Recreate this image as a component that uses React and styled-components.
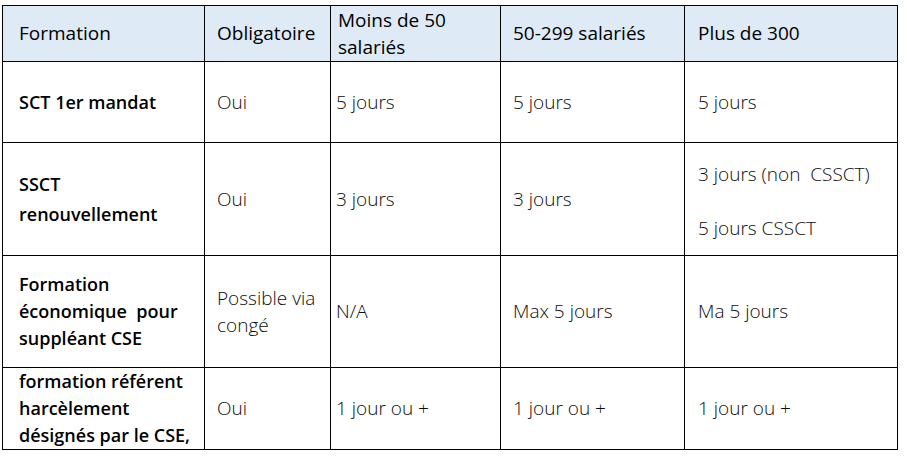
import React from "react";
import styled, { createGlobalStyle } from "styled-components";

const GlobalStyle = createGlobalStyle`
  body {
    margin: 0;
    background: #ffffff;
    font-family: "Open Sans", "Noto Sans", sans-serif;
  }
`;

const Page = styled.div`
  padding: 5px 0 0 2px;
`;

const Table = styled.table`
  border-collapse: collapse;
  table-layout: fixed;
  width: 896px;
  color: #111;
`;

const Row = styled.tr`
  height: ${(p) => p.$h}px;
`;

const HeadCell = styled.th`
  background: #deeaf6;
  border: 1px solid #000;
  text-align: left;
  vertical-align: middle;
  font-size: 19px;
  font-weight: 400;
  line-height: 27px;
  padding: 0 4px 0 ${(p) => p.$pad}px;
  color: #000;
`;

const Cell = styled.td`
  border: 1px solid #000;
  vertical-align: middle;
  font-size: ${(p) => (p.$strong ? 18 : 19)}px;
  font-weight: ${(p) => (p.$strong ? 600 : 300)};
  line-height: ${(p) => p.$lh ?? 27}px;
  padding: 0 4px 0 ${(p) => p.$pad}px;
  color: ${(p) => (p.$strong ? "#000" : "#0c0c0c")};
`;

const Stack = styled.div`
  display: flex;
  flex-direction: column;
  gap: ${(p) => p.$gap ?? 0}px;
  margin-top: ${(p) => p.$shift ?? 0}px;
`;

const Line = styled.div`
  white-space: pre;
`;

const cols = [202, 126, 170, 184, 213];
const pads = [16, 12, 5, 12, 13];

const rows = [
  {
    h: 81,
    cells: [["SCT 1er mandat"], ["Oui"], ["5 jours"], ["5 jours"], ["5 jours"]],
  },
  {
    h: 113,
    lh: 30,
    gap: 27,
    cells: [
      ["SSCT", "renouvellement"],
      ["Oui"],
      ["3 jours"],
      ["3 jours"],
      ["3 jours (non  CSSCT)", "5 jours CSSCT"],
    ],
  },
  {
    h: 112,
    cells: [
      ["Formation", "économique  pour", "suppléant CSE"],
      ["Possible via", "congé"],
      ["N/A"],
      ["Max 5 jours"],
      ["Ma 5 jours"],
    ],
  },
  {
    h: 80,
    cells: [
      ["formation référent", "harcèlement", "désignés par le CSE,"],
      ["Oui"],
      ["1 jour ou +"],
      ["1 jour ou +"],
      ["1 jour ou +"],
    ],
  },
];

export default function App() {
  return (
    <Page>
      <GlobalStyle />
      <Table>
        <colgroup>
          {cols.map((w, i) => (
            <col key={i} style={{ width: w }} />
          ))}
        </colgroup>
        <thead>
          <Row $h={56}>
            <HeadCell $pad={16}>Formation</HeadCell>
            <HeadCell $pad={12}>Obligatoire</HeadCell>
            <HeadCell $pad={7}>
              <Stack>
                <Line>Moins de 50</Line>
                <Line>salariés</Line>
              </Stack>
            </HeadCell>
            <HeadCell $pad={12}>50-299 salariés</HeadCell>
            <HeadCell $pad={13}>Plus de 300</HeadCell>
          </Row>
        </thead>
        <tbody>
          {rows.map((r, ri) => (
            <Row key={ri} $h={r.h}>
              {r.cells.map((lines, ci) => (
                <Cell
                  key={ci}
                  $pad={pads[ci]}
                  $strong={ci === 0}
                  $lh={ci === 0 ? r.lh : undefined}
                >
                  <Stack
                    $gap={ci === 4 ? r.gap : 0}
                    $shift={ci === 4 && r.gap ? 4 : 0}
                  >
                    {lines.map((t, li) => (
                      <Line key={li}>{t}</Line>
                    ))}
                  </Stack>
                </Cell>
              ))}
            </Row>
          ))}
        </tbody>
      </Table>
    </Page>
  );
}
